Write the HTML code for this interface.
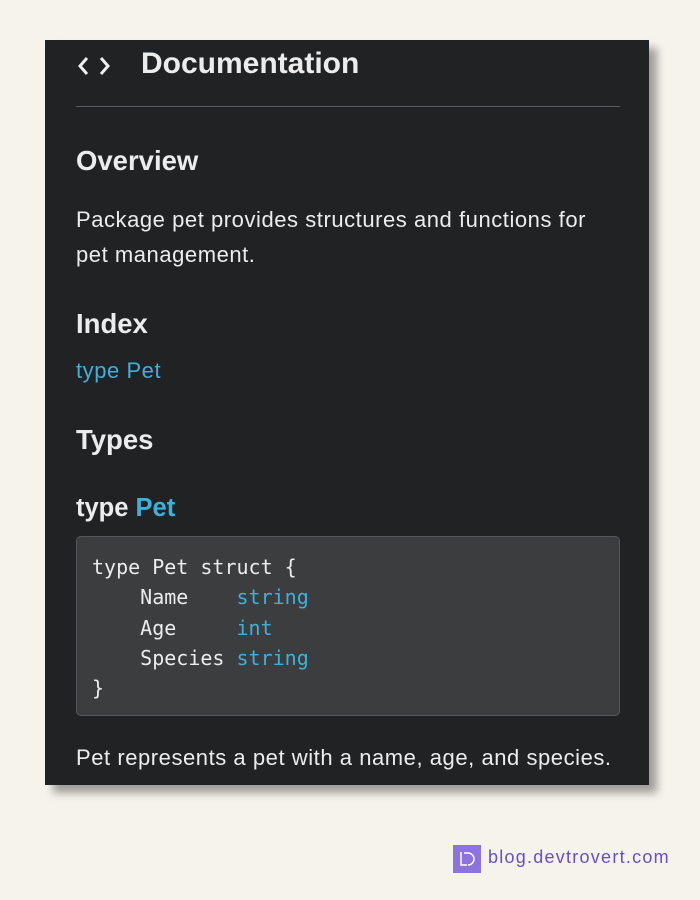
<!DOCTYPE html>
<html><head><meta charset="utf-8"><style>
*{margin:0;padding:0;box-sizing:border-box}
body{width:700px;height:900px;background:#f6f2ec;position:relative;overflow:hidden;font-family:"Liberation Sans",sans-serif}
.panel{position:absolute;left:45px;top:40px;width:604px;height:745px;background:#212224;box-shadow:8px 8px 8px rgba(0,0,0,0.35)}
.t{position:absolute;white-space:nowrap;color:#ececec}
.h{font-weight:bold;font-size:27.5px}
.p{font-size:22px;letter-spacing:0.55px}
.b{color:#3fb0db}
.code{position:absolute;left:76px;top:536px;width:544px;height:180px;background:#3c3d3f;border:1px solid #56575a;border-radius:5px}
.code pre{position:absolute;left:15px;top:15px;font-family:"DejaVu Sans Mono",monospace;font-size:20px;line-height:30.3px;color:#ececec}
</style></head><body>
<div class="panel"></div>
<svg style="position:absolute;left:78px;top:55px" width="32" height="22" viewBox="0 0 32 22"><path d="M9 3 L2 11 L9 19 M23 3 L30 11 L23 19" fill="none" stroke="#eee" stroke-width="3"/></svg>
<div class="t" style="left:141px;top:47px;font-size:30px;font-weight:bold">Documentation</div>
<div style="position:absolute;left:76px;top:106px;width:544px;height:1px;background:#5a5b5e"></div>
<div class="t h" style="left:76px;top:145px">Overview</div>
<div class="t p" style="left:76px;top:207px">Package pet provides structures and functions for</div>
<div class="t p" style="left:76px;top:242px">pet management.</div>
<div class="t h" style="left:76px;top:308px">Index</div>
<div class="t p b" style="left:76px;top:358px">type Pet</div>
<div class="t h" style="left:76px;top:424px">Types</div>
<div class="t h" style="left:76px;top:494px;font-size:25.5px">type <span class="b">Pet</span></div>
<div class="code"><pre>type Pet struct {
    Name    <span class="b">string</span>
    Age     <span class="b">int</span>
    Species <span class="b">string</span>
}</pre></div>
<div class="t p" style="left:76px;top:745px">Pet represents a pet with a name, age, and species.</div>
<div style="position:absolute;left:453px;top:845px;width:28px;height:28px;background:#8c73de"></div>
<svg style="position:absolute;left:453px;top:845px" width="28" height="28"><path d="M8 7 V20 H14 M11 8 H15 A6 6 0 0 1 15 20" fill="none" stroke="#fff" stroke-width="1.5"/></svg>
<div class="t" style="left:488px;top:847px;font-size:18px;color:#6a4fc4;letter-spacing:1.25px">blog.devtrovert.com</div>
</body></html>
